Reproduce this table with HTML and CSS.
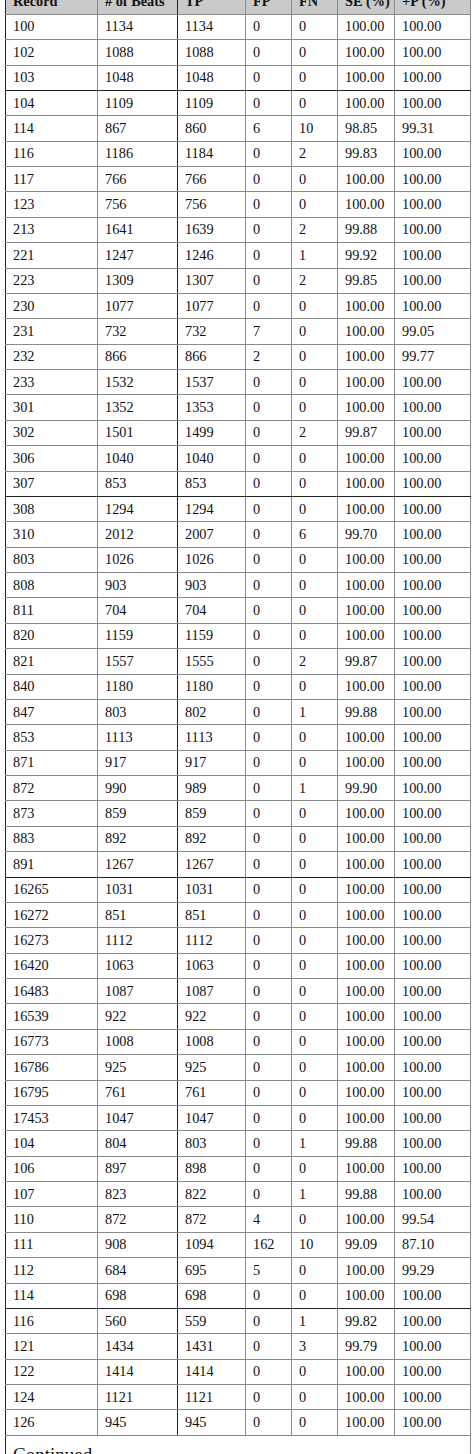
FILE: index.html
```html
<!DOCTYPE html>
<html lang="en">
<head>
<meta charset="utf-8">
<title>Table</title>
<link rel="stylesheet" href="styles.css">
</head>
<body>
<table class="data">
<colgroup>
<col class="c1"><col class="c2"><col class="c3"><col class="c4"><col class="c5"><col class="c6"><col class="c7">
</colgroup>
<thead>
<tr class="head"><th>Record</th><th># of Beats</th><th>TP</th><th>FP</th><th>FN</th><th>SE (%)</th><th>+P (%)</th></tr>
</thead>
<tbody>
<tr><td>100</td><td>1134</td><td>1134</td><td>0</td><td>0</td><td>100.00</td><td>100.00</td></tr>
<tr><td>102</td><td>1088</td><td>1088</td><td>0</td><td>0</td><td>100.00</td><td>100.00</td></tr>
<tr class="end"><td>103</td><td>1048</td><td>1048</td><td>0</td><td>0</td><td>100.00</td><td>100.00</td></tr>
<tr><td>104</td><td>1109</td><td>1109</td><td>0</td><td>0</td><td>100.00</td><td>100.00</td></tr>
<tr><td>114</td><td>867</td><td>860</td><td>6</td><td>10</td><td>98.85</td><td>99.31</td></tr>
<tr><td>116</td><td>1186</td><td>1184</td><td>0</td><td>2</td><td>99.83</td><td>100.00</td></tr>
<tr><td>117</td><td>766</td><td>766</td><td>0</td><td>0</td><td>100.00</td><td>100.00</td></tr>
<tr><td>123</td><td>756</td><td>756</td><td>0</td><td>0</td><td>100.00</td><td>100.00</td></tr>
<tr><td>213</td><td>1641</td><td>1639</td><td>0</td><td>2</td><td>99.88</td><td>100.00</td></tr>
<tr><td>221</td><td>1247</td><td>1246</td><td>0</td><td>1</td><td>99.92</td><td>100.00</td></tr>
<tr><td>223</td><td>1309</td><td>1307</td><td>0</td><td>2</td><td>99.85</td><td>100.00</td></tr>
<tr><td>230</td><td>1077</td><td>1077</td><td>0</td><td>0</td><td>100.00</td><td>100.00</td></tr>
<tr><td>231</td><td>732</td><td>732</td><td>7</td><td>0</td><td>100.00</td><td>99.05</td></tr>
<tr><td>232</td><td>866</td><td>866</td><td>2</td><td>0</td><td>100.00</td><td>99.77</td></tr>
<tr><td>233</td><td>1532</td><td>1537</td><td>0</td><td>0</td><td>100.00</td><td>100.00</td></tr>
<tr><td>301</td><td>1352</td><td>1353</td><td>0</td><td>0</td><td>100.00</td><td>100.00</td></tr>
<tr><td>302</td><td>1501</td><td>1499</td><td>0</td><td>2</td><td>99.87</td><td>100.00</td></tr>
<tr><td>306</td><td>1040</td><td>1040</td><td>0</td><td>0</td><td>100.00</td><td>100.00</td></tr>
<tr class="end"><td>307</td><td>853</td><td>853</td><td>0</td><td>0</td><td>100.00</td><td>100.00</td></tr>
<tr><td>308</td><td>1294</td><td>1294</td><td>0</td><td>0</td><td>100.00</td><td>100.00</td></tr>
<tr><td>310</td><td>2012</td><td>2007</td><td>0</td><td>6</td><td>99.70</td><td>100.00</td></tr>
<tr><td>803</td><td>1026</td><td>1026</td><td>0</td><td>0</td><td>100.00</td><td>100.00</td></tr>
<tr><td>808</td><td>903</td><td>903</td><td>0</td><td>0</td><td>100.00</td><td>100.00</td></tr>
<tr><td>811</td><td>704</td><td>704</td><td>0</td><td>0</td><td>100.00</td><td>100.00</td></tr>
<tr><td>820</td><td>1159</td><td>1159</td><td>0</td><td>0</td><td>100.00</td><td>100.00</td></tr>
<tr><td>821</td><td>1557</td><td>1555</td><td>0</td><td>2</td><td>99.87</td><td>100.00</td></tr>
<tr><td>840</td><td>1180</td><td>1180</td><td>0</td><td>0</td><td>100.00</td><td>100.00</td></tr>
<tr><td>847</td><td>803</td><td>802</td><td>0</td><td>1</td><td>99.88</td><td>100.00</td></tr>
<tr><td>853</td><td>1113</td><td>1113</td><td>0</td><td>0</td><td>100.00</td><td>100.00</td></tr>
<tr><td>871</td><td>917</td><td>917</td><td>0</td><td>0</td><td>100.00</td><td>100.00</td></tr>
<tr><td>872</td><td>990</td><td>989</td><td>0</td><td>1</td><td>99.90</td><td>100.00</td></tr>
<tr><td>873</td><td>859</td><td>859</td><td>0</td><td>0</td><td>100.00</td><td>100.00</td></tr>
<tr><td>883</td><td>892</td><td>892</td><td>0</td><td>0</td><td>100.00</td><td>100.00</td></tr>
<tr class="end"><td>891</td><td>1267</td><td>1267</td><td>0</td><td>0</td><td>100.00</td><td>100.00</td></tr>
<tr><td>16265</td><td>1031</td><td>1031</td><td>0</td><td>0</td><td>100.00</td><td>100.00</td></tr>
<tr><td>16272</td><td>851</td><td>851</td><td>0</td><td>0</td><td>100.00</td><td>100.00</td></tr>
<tr><td>16273</td><td>1112</td><td>1112</td><td>0</td><td>0</td><td>100.00</td><td>100.00</td></tr>
<tr><td>16420</td><td>1063</td><td>1063</td><td>0</td><td>0</td><td>100.00</td><td>100.00</td></tr>
<tr><td>16483</td><td>1087</td><td>1087</td><td>0</td><td>0</td><td>100.00</td><td>100.00</td></tr>
<tr><td>16539</td><td>922</td><td>922</td><td>0</td><td>0</td><td>100.00</td><td>100.00</td></tr>
<tr><td>16773</td><td>1008</td><td>1008</td><td>0</td><td>0</td><td>100.00</td><td>100.00</td></tr>
<tr><td>16786</td><td>925</td><td>925</td><td>0</td><td>0</td><td>100.00</td><td>100.00</td></tr>
<tr><td>16795</td><td>761</td><td>761</td><td>0</td><td>0</td><td>100.00</td><td>100.00</td></tr>
<tr><td>17453</td><td>1047</td><td>1047</td><td>0</td><td>0</td><td>100.00</td><td>100.00</td></tr>
<tr><td>104</td><td>804</td><td>803</td><td>0</td><td>1</td><td>99.88</td><td>100.00</td></tr>
<tr><td>106</td><td>897</td><td>898</td><td>0</td><td>0</td><td>100.00</td><td>100.00</td></tr>
<tr><td>107</td><td>823</td><td>822</td><td>0</td><td>1</td><td>99.88</td><td>100.00</td></tr>
<tr><td>110</td><td>872</td><td>872</td><td>4</td><td>0</td><td>100.00</td><td>99.54</td></tr>
<tr><td>111</td><td>908</td><td>1094</td><td>162</td><td>10</td><td>99.09</td><td>87.10</td></tr>
<tr><td>112</td><td>684</td><td>695</td><td>5</td><td>0</td><td>100.00</td><td>99.29</td></tr>
<tr class="end"><td>114</td><td>698</td><td>698</td><td>0</td><td>0</td><td>100.00</td><td>100.00</td></tr>
<tr><td>116</td><td>560</td><td>559</td><td>0</td><td>1</td><td>99.82</td><td>100.00</td></tr>
<tr><td>121</td><td>1434</td><td>1431</td><td>0</td><td>3</td><td>99.79</td><td>100.00</td></tr>
<tr><td>122</td><td>1414</td><td>1414</td><td>0</td><td>0</td><td>100.00</td><td>100.00</td></tr>
<tr><td>124</td><td>1121</td><td>1121</td><td>0</td><td>0</td><td>100.00</td><td>100.00</td></tr>
<tr><td>126</td><td>945</td><td>945</td><td>0</td><td>0</td><td>100.00</td><td>100.00</td></tr>
</tbody>
<tfoot>
<tr class="foot"><td colspan="7">Continued</td></tr>
</tfoot>
</table>
</body>
</html>
```

FILE: styles.css
```css
html, body {
  margin: 0;
  padding: 0;
  background: #ffffff;
}

body {
  font-family: "Liberation Serif", "Times New Roman", serif;
  color: #111111;
  overflow: hidden;
}

.data {
  border-collapse: collapse;
  table-layout: fixed;
  width: 465px;
  margin: -11.6px 0 0 5px;
  font-size: 14.3px;
}

.c1 { width: 92px; }
.c2 { width: 80px; }
.c3 { width: 68px; }
.c4 { width: 46px; }
.c5 { width: 46px; }
.c6 { width: 57px; }
.c7 { width: 76px; }

.data tr {
  height: 25.38px;
}

.data th,
.data td {
  border: 1px solid #8a8a8a;
  padding: 0 7px;
  text-align: left;
  vertical-align: middle;
  white-space: nowrap;
  overflow: hidden;
}

.data th {
  background: #c9c9c9;
  font-weight: bold;
}

.data th:first-child,
.data td:first-child {
  border-left-color: #222222;
}

.data th:nth-child(2),
.data td:nth-child(2) {
  border-right-color: #222222;
}

.data .end td {
  border-bottom-color: #222222;
}

.data .foot td {
  font-size: 19px;
  padding: 8px 7px 10px;
  border-bottom: none;
  vertical-align: top;
}
```
